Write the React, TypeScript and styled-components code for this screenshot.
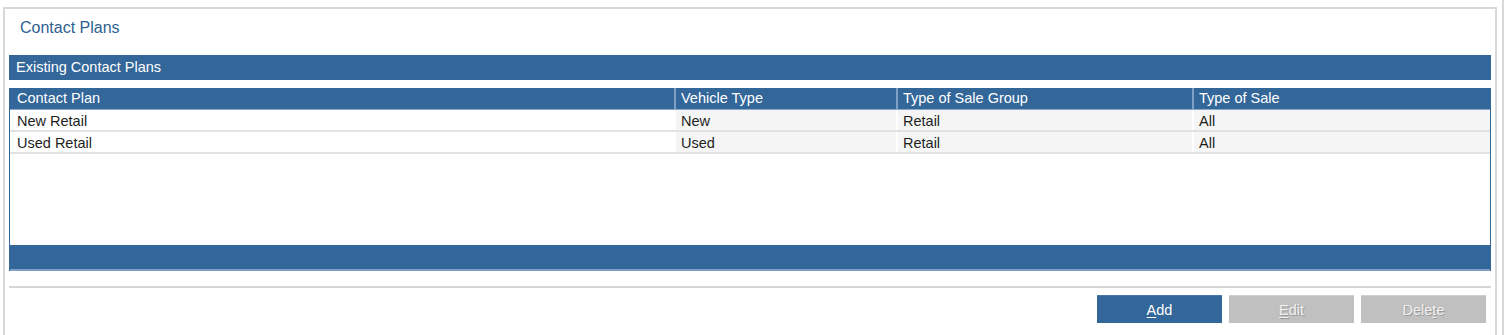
import React from "react";
import styled, { createGlobalStyle } from "styled-components";

const GlobalStyle = createGlobalStyle`
	html, body {
		margin: 0;
		padding: 0;
		background: #ffffff;
		font-family: "Liberation Sans", Arial, sans-serif;
	}
`;

type Plan = {
	name: string;
	vehicle: string;
	group: string;
	sale: string;
};

const plans: Plan[] = [
	{ name: "New Retail", vehicle: "New", group: "Retail", sale: "All" },
	{ name: "Used Retail", vehicle: "Used", group: "Retail", sale: "All" },
];

const columns = [
	{ label: "Contact Plan", width: 664 },
	{ label: "Vehicle Type", width: 222 },
	{ label: "Type of Sale Group", width: 296 },
	{ label: "Type of Sale", width: 0 },
];

const App: React.FC = () => {
	return (
		<>
			<GlobalStyle />
			<Page>
				<Panel>
					<Title>Contact Plans</Title>
					<SectionHeader>Existing Contact Plans</SectionHeader>
					<Grid>
						<HeaderRow>
							{columns.map((c, i) => (
								<HeadCell key={c.label} $width={c.width} $first={i === 0}>
									{c.label}
								</HeadCell>
							))}
						</HeaderRow>
						<Body>
							{plans.map((p) => (
								<Row key={p.name}>
									<Cell $width={columns[0].width} $first>
										{p.name}
									</Cell>
									<Cell $width={columns[1].width}>{p.vehicle}</Cell>
									<Cell $width={columns[2].width}>{p.group}</Cell>
									<Cell $width={columns[3].width}>{p.sale}</Cell>
								</Row>
							))}
						</Body>
						<Footer />
					</Grid>
					<Divider />
					<Actions>
						<Button>
							<u>A</u>dd
						</Button>
						<Button $disabled>
							<u>E</u>dit
						</Button>
						<Button $disabled>
							Dele<u>t</u>e
						</Button>
					</Actions>
				</Panel>
				<ScrollEdge />
			</Page>
		</>
	);
};

export default App;

const Page = styled.div`
	display: flex;
	width: 1504px;
	height: 335px;
	box-sizing: border-box;
	padding: 7px 0 0 3px;
	overflow: hidden;
`;

const Panel = styled.div`
	width: 1494px;
	box-sizing: border-box;
	border: 2px solid #d8d8d8;
	border-bottom: none;
	padding: 0 4px;
	display: flex;
	flex-direction: column;
`;

const ScrollEdge = styled.div`
	margin-left: 5px;
	margin-top: -7px;
	border-left: 2px solid #d8d8d8;
`;

const Title = styled.div`
	height: 46px;
	box-sizing: border-box;
	padding: 9px 0 0 11px;
	font-size: 16px;
	line-height: 20px;
	color: #2f5f92;
`;

const SectionHeader = styled.div`
	height: 25px;
	padding-left: 7px;
	background: #336699;
	color: #ffffff;
	font-size: 14.5px;
	line-height: 25px;
`;

const Grid = styled.div`
	margin-top: 8px;
	border-left: 1px solid #336699;
	border-right: 1px solid #336699;
	display: flex;
	flex-direction: column;
`;

const HeaderRow = styled.div`
	display: flex;
	height: 22px;
	background: #336699;
	border-bottom: 1px solid #8aa8cb;
	box-sizing: border-box;
`;

const HeadCell = styled.div<{ $width: number; $first?: boolean }>`
	${(p) => (p.$width ? `width: ${p.$width}px;` : "flex: 1;")}
	box-sizing: border-box;
	padding-left: ${(p) => (p.$first ? "7px" : "5px")};
	border-left: ${(p) => (p.$first ? "none" : "2px solid #7f9fc4")};
	color: #ffffff;
	font-size: 14.5px;
	line-height: 21px;
	white-space: nowrap;
`;

const Body = styled.div`
	height: 135px;
	background: #ffffff;
`;

const Row = styled.div`
	display: flex;
	height: 22px;
	box-sizing: border-box;
	border-bottom: 2px solid #e2e2e2;
`;

const Cell = styled.div<{ $width: number; $first?: boolean }>`
	${(p) => (p.$width ? `width: ${p.$width}px;` : "flex: 1;")}
	box-sizing: border-box;
	padding-left: ${(p) => (p.$first ? "7px" : "5px")};
	border-left: ${(p) => (p.$first ? "none" : "2px solid #ffffff")};
	background: ${(p) => (p.$first ? "#ffffff" : "#f5f5f5")};
	color: #1e1e1e;
	font-size: 14.5px;
	line-height: 22px;
	white-space: nowrap;
`;

const Footer = styled.div`
	height: 24px;
	background: #336699;
	border-bottom: 2px solid #7f9fc4;
`;

const Divider = styled.div`
	margin-top: 15px;
	height: 2px;
	background: #d6d6d6;
`;

const Actions = styled.div`
	display: flex;
	justify-content: flex-end;
	gap: 7px;
	margin-top: 7px;
	padding-right: 5px;
`;

const Button = styled.button<{ $disabled?: boolean }>`
	width: 125px;
	height: 28px;
	box-sizing: border-box;
	border: none;
	margin: 0;
	padding: 0;
	font-family: "Liberation Sans", Arial, sans-serif;
	font-size: 14.5px;
	background: ${(p) => (p.$disabled ? "#c0c0c0" : "#336699")};
	color: ${(p) => (p.$disabled ? "#f0f0f0" : "#ffffff")};
	text-shadow: ${(p) => (p.$disabled ? "1px 1px 0 #9a9a9a" : "none")};
	border-top: 1px solid ${(p) => (p.$disabled ? "#cfcfcf" : "#4a7aab")};

	u {
		text-underline-offset: 2px;
	}
`;
